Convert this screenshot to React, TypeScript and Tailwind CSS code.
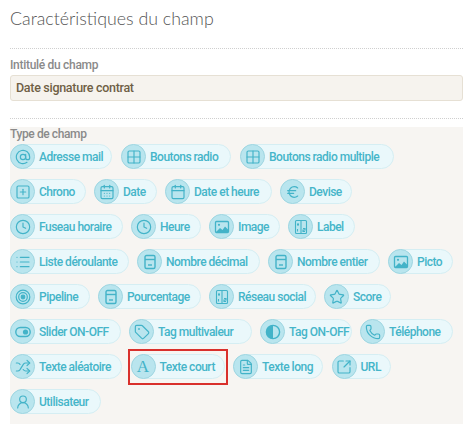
import type { ReactNode } from "react";
import {
  AtSign,
  Calendar,
  CalendarDays,
  Clock,
  Euro,
  FileText,
  Grid2x2,
  List,
  Phone,
  Shuffle,
  SquareArrowOutUpRight,
  SquarePlus,
  Star,
  Tag,
  UserRound,
} from "lucide-react";

const ICON = "h-[16px] w-[16px] stroke-[1.75]";

/** Rectangle with a header band, used for the number and percentage types. */
function NumberIcon() {
  return (
    <svg viewBox="0 0 16 16" className="h-[16px] w-[16px]" fill="none" stroke="currentColor" strokeWidth="1.4">
      <rect x="3" y="1.5" width="10" height="13" rx="1.5" />
      <path d="M3 5.5h10" />
      <path d="M6 11h4" />
    </svg>
  );
}

function LabelIcon() {
  return (
    <svg viewBox="0 0 16 16" className="h-[16px] w-[16px]" fill="none" stroke="currentColor" strokeWidth="1.1">
      <rect x="2.5" y="1.5" width="11" height="13" rx="1" />
      <path d="M8 1.5v13M5 4v3M4 5.5h2M10 9.5h2v1.5h-2v1.5h2M4.5 10v2.5" />
    </svg>
  );
}

function PictureIcon() {
  return (
    <svg viewBox="0 0 16 16" className="h-[16px] w-[16px]" fill="none" stroke="currentColor" strokeWidth="1.3">
      <rect x="1.5" y="2.5" width="13" height="11" rx="1" />
      <circle cx="5" cy="5.8" r="1.1" fill="currentColor" stroke="none" />
      <path d="M2 13l4-4 2.5 2 2.5-3.5 3.5 3.5V13z" fill="currentColor" stroke="none" />
    </svg>
  );
}

function PipelineIcon() {
  return (
    <svg viewBox="0 0 16 16" className="h-[16px] w-[16px]" fill="none" stroke="currentColor" strokeWidth="1.2">
      <circle cx="8" cy="8" r="6.8" />
      <circle cx="8" cy="8" r="4.3" />
      <circle cx="8" cy="8" r="1.8" fill="currentColor" />
    </svg>
  );
}

function SliderIcon() {
  return (
    <svg viewBox="0 0 16 16" className="h-[16px] w-[16px]" fill="none" stroke="currentColor" strokeWidth="1.4">
      <rect x="0.8" y="3.5" width="14.4" height="9" rx="4.5" />
      <circle cx="10.5" cy="8" r="2.6" fill="currentColor" stroke="none" />
    </svg>
  );
}

function HalfCircleIcon() {
  return (
    <svg viewBox="0 0 16 16" className="h-[16px] w-[16px]" fill="none" stroke="currentColor" strokeWidth="1.4">
      <circle cx="8" cy="8" r="6.6" />
      <path d="M8 1.4a6.6 6.6 0 0 0 0 13.2z" fill="currentColor" stroke="none" />
    </svg>
  );
}

function LetterIcon() {
  return <span className="font-['Liberation_Serif',serif] text-[17px] leading-none">A</span>;
}

type Field = { label: string; width: string; icon: ReactNode; marked?: boolean };

const ROWS: { gap: string; fields: Field[] }[] = [
  {
    gap: "gap-[9px]",
    fields: [
      { label: "Adresse mail", width: "w-[102px]", icon: <AtSign className={ICON} /> },
      { label: "Boutons radio", width: "w-[110px]", icon: <Grid2x2 className={ICON} /> },
      { label: "Boutons radio multiple", width: "w-[154px]", icon: <Grid2x2 className={ICON} /> },
    ],
  },
  {
    gap: "gap-[8px]",
    fields: [
      { label: "Chrono", width: "w-[76px]", icon: <SquarePlus className={ICON} /> },
      { label: "Date", width: "w-[63px]", icon: <CalendarDays className={ICON} /> },
      { label: "Date et heure", width: "w-[107px]", icon: <Calendar className={ICON} /> },
      { label: "Devise", width: "w-[72px]", icon: <Euro className={ICON} /> },
    ],
  },
  {
    gap: "gap-[8px]",
    fields: [
      { label: "Fuseau horaire", width: "w-[113px]", icon: <Clock className={ICON} /> },
      { label: "Heure", width: "w-[70px]", icon: <Clock className={ICON} /> },
      { label: "Image", width: "w-[71px]", icon: <PictureIcon /> },
      { label: "Label", width: "w-[67px]", icon: <LabelIcon /> },
    ],
  },
  {
    gap: "gap-[8px]",
    fields: [
      { label: "Liste déroulante", width: "w-[119px]", icon: <List className={ICON} /> },
      { label: "Nombre décimal", width: "w-[123px]", icon: <NumberIcon /> },
      { label: "Nombre entier", width: "w-[112px]", icon: <NumberIcon /> },
      { label: "Picto", width: "w-[65px]", icon: <PictureIcon /> },
    ],
  },
  {
    gap: "gap-[8px]",
    fields: [
      { label: "Pipeline", width: "w-[80px]", icon: <PipelineIcon /> },
      { label: "Pourcentage", width: "w-[103px]", icon: <NumberIcon /> },
      { label: "Réseau social", width: "w-[107px]", icon: <LabelIcon /> },
      { label: "Score", width: "w-[67px]", icon: <Star className={ICON} /> },
    ],
  },
  {
    gap: "gap-[8px]",
    fields: [
      { label: "Slider ON-OFF", width: "w-[111px]", icon: <SliderIcon /> },
      { label: "Tag multivaleur", width: "w-[123px]", icon: <Tag className={ICON} /> },
      { label: "Tag ON-OFF", width: "w-[92px]", icon: <HalfCircleIcon /> },
      { label: "Téléphone", width: "w-[93px]", icon: <Phone className={ICON} /> },
    ],
  },
  {
    gap: "gap-[8.5px]",
    fields: [
      { label: "Texte aléatoire", width: "w-[112px]", icon: <Shuffle className={ICON} /> },
      { label: "Texte court", width: "w-[94px]", icon: <LetterIcon />, marked: true },
      { label: "Texte long", width: "w-[90px]", icon: <FileText className={ICON} /> },
      { label: "URL", width: "w-[59px]", icon: <SquareArrowOutUpRight className={ICON} /> },
    ],
  },
  {
    gap: "gap-[8px]",
    fields: [{ label: "Utilisateur", width: "w-[91px]", icon: <UserRound className={ICON} /> }],
  },
];

function FieldChip({ label, width, icon, marked }: Field) {
  return (
    <div className={`relative flex h-[25px] shrink-0 items-center rounded-full border border-[#d5eef3] bg-[#eaf8fb] ${width}`}>
      <span className="-ml-px flex h-[25px] w-[25px] shrink-0 items-center justify-center rounded-full border border-[#9fd6e1] bg-[#b9e5ee] text-[#43b3c8]">
        {icon}
      </span>
      <span className="ml-[4px] whitespace-nowrap font-['Roboto',sans-serif] text-[12px] font-medium tracking-[-0.5px] text-[#45b5c9]">
        {label}
      </span>
      {/* Red annotation drawn over the screenshot */}
      {marked && (
        <span className="absolute -top-[6px] -bottom-[7px] -left-[4px] -right-[4px] border-2 border-[#d9302c]" />
      )}
    </div>
  );
}

export default function App() {
  return (
    <div className="h-[432px] w-[474px] overflow-hidden bg-white pl-[10px] pr-[11px] font-['Lato','Noto_Sans',sans-serif]">
      <h1 className="pt-[6px] text-[17.8px] font-light leading-[24px] text-[#555555]">Caractéristiques du champ</h1>

      <div className="mt-[18px] border-t border-dotted border-[#cfcfcf] pt-[8px]">
        <label className="block font-['Roboto',sans-serif] text-[12px] font-medium leading-[16px] tracking-[-0.3px] text-[#8a8a8a]">
          Intitulé du champ
        </label>
        <div className="mt-[2px] flex h-[26px] items-center rounded-[3px] border border-[#e6e0d4] bg-[#f6f3ee] px-[5px] font-['Roboto',sans-serif] text-[12.5px] font-medium tracking-[-0.3px] text-[#6f5f45]">
          Date signature contrat
        </div>
      </div>

      <div className="mt-[17px] border-t border-dotted border-[#cfcfcf] pt-[8px]">
        <div className="h-[297px] bg-[#f7f5f2]">
          <label className="block font-['Roboto',sans-serif] text-[12px] font-medium leading-[14px] tracking-[-0.4px] text-[#8a8a8a]">
            Type de champ
          </label>
          <div className="mt-[3px] flex flex-col gap-[10px]">
            {ROWS.map((row) => (
              <div key={row.fields[0].label} className={`flex ${row.gap}`}>
                {row.fields.map((field) => (
                  <FieldChip key={field.label} {...field} />
                ))}
              </div>
            ))}
          </div>
        </div>
      </div>
    </div>
  );
}
